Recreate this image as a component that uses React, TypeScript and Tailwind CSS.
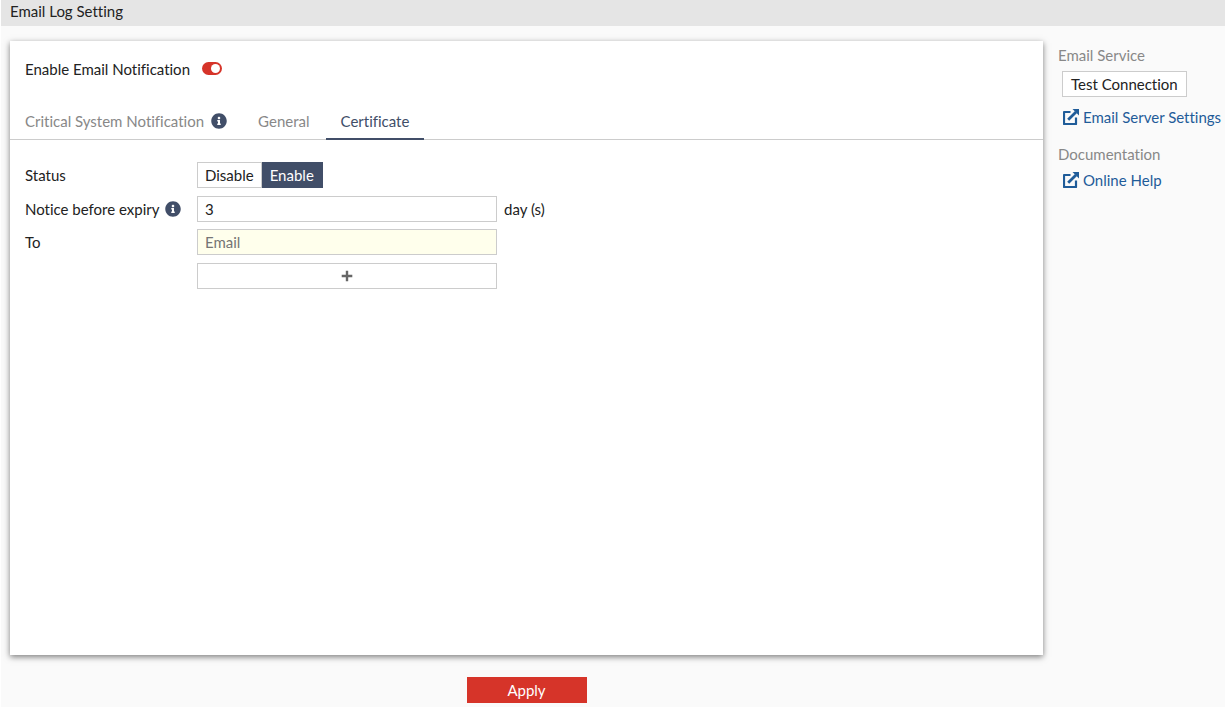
import { useState } from "react";
import { FaInfoCircle } from "react-icons/fa";

function OpenIcon() {
  return (
    <svg className="size-4 shrink-0" viewBox="0 0 16 16" fill="none" aria-hidden="true">
      <path d="M7.5 3H1v12h12V8.5" stroke="currentColor" strokeWidth="2.2" strokeLinejoin="round" />
      <path d="M5.2 10.8L13 3" stroke="currentColor" strokeWidth="2.8" />
      <path d="M9.5 0H16v6.5z" fill="currentColor" />
    </svg>
  );
}

function Info({ label }: { label: string }) {
  return (
    <span role="img" aria-label={label} className="text-[#414e68]">
      <FaInfoCircle className="size-4" />
    </span>
  );
}

const tabs = ["Critical System Notification", "General", "Certificate"];

export default function App() {
  const [enabled, setEnabled] = useState(true);
  const [tab, setTab] = useState("Certificate");
  const [status, setStatus] = useState("Enable");
  const [days, setDays] = useState("3");
  const [emails, setEmails] = useState([""]);

  return (
    <div className="flex min-h-screen flex-col bg-white pb-px pl-px font-['Lato',sans-serif] text-[15px] leading-6 text-[#222] [font-variant-ligatures:none]">
      <header className="h-[26px] bg-[#e5e5e5] px-[9px] leading-[22px]">
        <h1>Email Log Setting</h1>
      </header>
      <div className="flex flex-1 bg-[#fafafa] pt-[15px] pl-[9px]">
        <main className="flex min-w-0 flex-1 flex-col">
          <section className="flex-1 bg-white shadow-[0_2px_6px_rgba(0,0,0,0.5)]">
            <div className="flex items-start gap-3 px-[15px] pt-4">
              <label htmlFor="enable-email">Enable Email Notification</label>
              <span className="flex pt-[5px]">
                <input
                  id="enable-email"
                  type="checkbox"
                  role="switch"
                  checked={enabled}
                  onChange={(e) => setEnabled(e.target.checked)}
                  className="flex h-[13px] w-5 cursor-pointer appearance-none items-center rounded-full bg-gray-400 px-0.5 before:size-[9px] before:rounded-full before:bg-white checked:justify-end checked:bg-[#d63429]"
                />
              </span>
            </div>
            <div role="tablist" className="mt-6 flex gap-px border-b border-[#ccc]">
              {tabs.map((name) => (
                <button
                  key={name}
                  role="tab"
                  aria-selected={tab === name}
                  onClick={() => setTab(name)}
                  className="-mb-px flex h-[35px] items-start gap-[7px] border-b-2 border-transparent px-[15px] pt-1 text-[#888] aria-selected:border-[#414e68] aria-selected:text-[#414e68]"
                >
                  {name}
                  {name === tabs[0] && (
                    <span className="pt-1">
                      <Info label="About critical system notifications" />
                    </span>
                  )}
                </button>
              ))}
            </div>
            <form id="certificate" onSubmit={(e) => e.preventDefault()} className="flex flex-col gap-2 px-[15px] pt-[22px]">
              <div className="flex items-center">
                <span id="status-label" className="w-[172px]">Status</span>
                <div role="group" aria-labelledby="status-label" className="flex">
                  {["Disable", "Enable"].map((name) => (
                    <button
                      key={name}
                      type="button"
                      aria-pressed={status === name}
                      onClick={() => setStatus(name)}
                      className="h-[26px] border border-[#ccc] px-[7px] not-first:border-l-0 not-first:px-2 aria-pressed:border-[#414e68] aria-pressed:bg-[#414e68] aria-pressed:text-white"
                    >
                      {name}
                    </button>
                  ))}
                </div>
              </div>
              <div className="flex items-center">
                <div className="flex w-[172px] items-center gap-[5px]">
                  <label htmlFor="days">Notice before expiry</label>
                  <Info label="Days of notice before a certificate expires" />
                </div>
                <input
                  id="days"
                  value={days}
                  onChange={(e) => setDays(e.target.value)}
                  className="h-[26px] w-[300px] border border-[#ccc] bg-white px-[7px]"
                />
                <span className="ml-[7px]">day (s)</span>
              </div>
              <div className="-mt-px flex items-start">
                <label htmlFor="email-0" className="w-[172px] leading-[26px]">To</label>
                <div className="flex w-[300px] flex-col gap-2">
                  {emails.map((email, i) => (
                    <input
                      key={i}
                      id={`email-${i}`}
                      type="email"
                      aria-label="Email"
                      placeholder="Email"
                      value={email}
                      onChange={(e) => setEmails(emails.map((v, j) => (j === i ? e.target.value : v)))}
                      className="h-[26px] border border-[#ccc] bg-[#ffffec] px-[7px] placeholder:text-[#757575]"
                    />
                  ))}
                  <button
                    type="button"
                    aria-label="Add email"
                    onClick={() => setEmails([...emails, ""])}
                    className="flex h-[26px] items-center justify-center border border-[#ccc] bg-white text-[#666]"
                  >
                    <svg className="size-3" viewBox="0 0 12 12" aria-hidden="true">
                      <path d="M4.8 .7h2.4v4.1h4.1v2.4H7.2v4.1H4.8V7.2H.7V4.8h4.1z" fill="currentColor" />
                    </svg>
                  </button>
                </div>
              </div>
            </form>
          </section>
          <div className="flex justify-center pt-[22px] pb-1">
            <button type="submit" form="certificate" className="h-[26px] w-[120px] bg-[#d63429] text-white">
              Apply
            </button>
          </div>
        </main>
        <aside className="w-[182px] shrink-0 pt-0.5 pl-[15px]">
          <h2 className="text-[#888]">Email Service</h2>
          <button className="mt-1 ml-1 h-[26px] border border-[#ccc] bg-white px-2">Test Connection</button>
          <a href="#email-server" className="mt-2 ml-[5px] flex items-center gap-1 whitespace-nowrap text-[#1f5c99]">
            <OpenIcon />
            Email Server Settings
          </a>
          <h2 className="mt-[13px] text-[#888]">Documentation</h2>
          <a href="#help" className="mt-0.5 ml-[5px] flex items-center gap-1 whitespace-nowrap text-[#1f5c99]">
            <OpenIcon />
            Online Help
          </a>
        </aside>
      </div>
    </div>
  );
}
